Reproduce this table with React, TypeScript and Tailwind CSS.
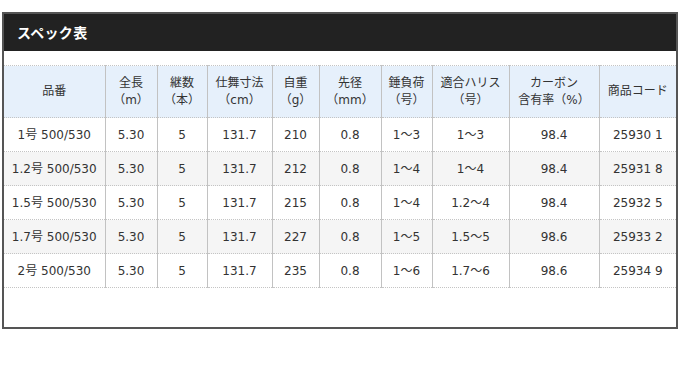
const columns = [
  { w: 101, head: ["品番"] },
  { w: 52, head: ["全長", "（m）"] },
  { w: 50, head: ["継数", "（本）"] },
  { w: 65, head: ["仕舞寸法", "（cm）"] },
  { w: 47, head: ["自重", "（g）"] },
  { w: 62, head: ["先径", "（mm）"] },
  { w: 51, head: ["錘負荷", "（号）"] },
  { w: 77, head: ["適合ハリス", "（号）"] },
  { w: 90, head: ["カーボン", "含有率（%）"] },
  { w: 77, head: ["商品コード"] },
];

const rows = [
  ["1号 500/530", "5.30", "5", "131.7", "210", "0.8", "1～3", "1～3", "98.4", "25930 1"],
  ["1.2号 500/530", "5.30", "5", "131.7", "212", "0.8", "1～4", "1～4", "98.4", "25931 8"],
  ["1.5号 500/530", "5.30", "5", "131.7", "215", "0.8", "1～4", "1.2～4", "98.4", "25932 5"],
  ["1.7号 500/530", "5.30", "5", "131.7", "227", "0.8", "1～5", "1.5～5", "98.6", "25933 2"],
  ["2号 500/530", "5.30", "5", "131.7", "235", "0.8", "1～6", "1.7～6", "98.6", "25934 9"],
];

export default function App() {
  return (
    <div className="h-[381px] w-[680px] bg-white pt-[12px] font-['DejaVu_Sans','Noto_Sans_CJK_JP',sans-serif] text-[#333]">
      <section className="mx-[2px] h-[317px] border-2 border-[#555]">
        <h2 className="flex h-[37px] items-center bg-[#222] pl-[13px] font-['Noto_Sans_CJK_JP',sans-serif] text-[14px] font-bold tracking-[0.02em] text-white">
          スペック表
        </h2>

        <table className="mt-[14px] table-fixed border-collapse text-[12px]">
          <colgroup>
            {columns.map((c, i) => (
              <col key={i} style={{ width: c.w }} />
            ))}
          </colgroup>
          <thead>
            <tr className="h-[52px] border-t border-dotted border-[#c4c4c4] bg-[#e6f0fb]">
              {columns.map((c, i) => (
                <th
                  key={i}
                  className={`p-0 text-center font-normal leading-[17px] ${i < columns.length - 1 ? "border-r border-[#c2c2c2]" : ""}`}
                >
                  {c.head.map((line, j) => (
                    <div key={j}>{line}</div>
                  ))}
                </th>
              ))}
            </tr>
          </thead>
          <tbody>
            {rows.map((row, r) => (
              <tr
                key={r}
                className={`h-[34px] border-t border-b border-dotted border-[#c4c4c4] ${r % 2 === 1 ? "bg-[#f5f5f5]" : "bg-white"}`}
              >
                {row.map((cell, i) => (
                  <td
                    key={i}
                    className={`p-0 text-center leading-none ${i < row.length - 1 ? "border-r border-solid border-r-[#c2c2c2]" : ""}`}
                  >
                    {cell}
                  </td>
                ))}
              </tr>
            ))}
          </tbody>
        </table>
      </section>
    </div>
  );
}
